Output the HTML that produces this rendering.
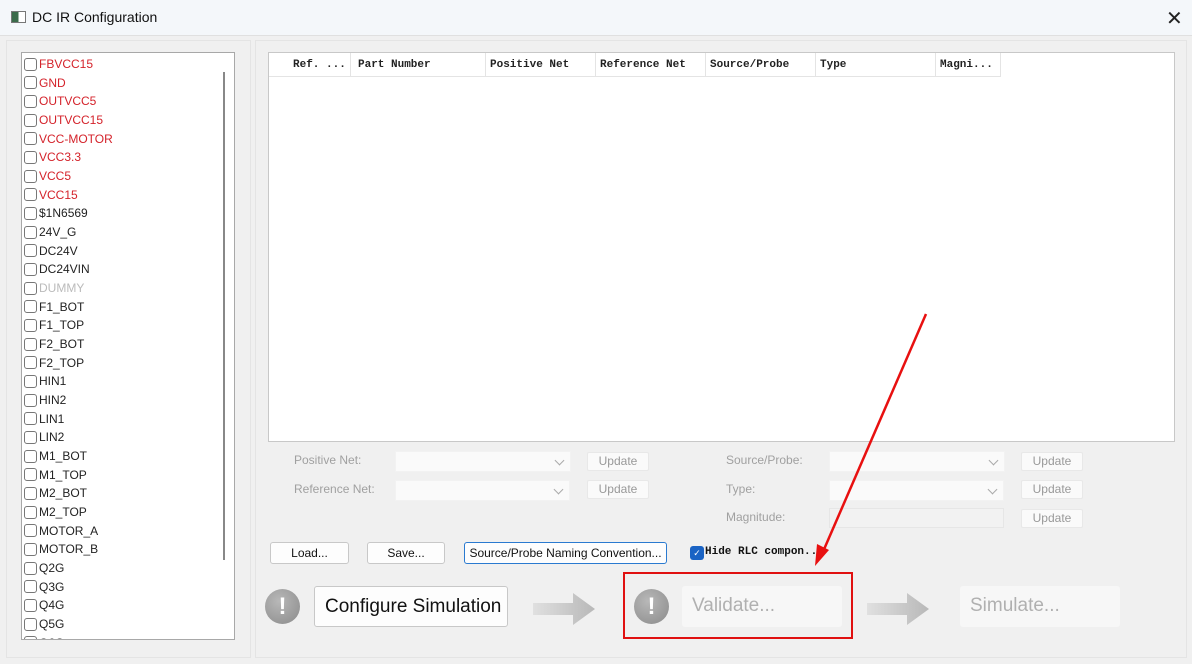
<!DOCTYPE html>
<html><head><style>
*{margin:0;padding:0;box-sizing:border-box}
body{width:1192px;height:664px;background:#f0f0f0;font-family:"Liberation Sans",sans-serif;position:relative;overflow:hidden;font-size:12px}
.a{position:absolute;white-space:nowrap}
.title{left:0;top:0;width:1192px;height:36px;background:#f4f7fa;border-bottom:1px solid #e0e0e0}
.list{left:21px;top:52px;width:214px;height:588px;background:#fff;border:1px solid #a8a8a8;overflow:hidden}
.it{position:absolute;left:2px;height:18px;display:flex;align-items:center;font-size:12px}
.cb{width:13px;height:13px;border:1px solid #777;border-radius:3px;margin-right:2px;background:#fff}
.red{color:#d4222a}.blk{color:#222}.gry{color:#bbb}
.tbl{left:268px;top:52px;width:907px;height:390px;background:#fff;border:1px solid #c8c8c8}
.th{position:absolute;top:0;height:24px;line-height:24px;font-family:"Liberation Mono",monospace;font-size:11px;font-weight:bold;color:#222;border-right:1px solid #e4e4e4;border-bottom:1px solid #e4e4e4;white-space:nowrap;overflow:hidden}
.lbl{color:#a0a0a0;font-size:12px}
.dd{background:#fafafa;height:21px;border:1px solid #f2f2f2}
.dd:after{content:"";position:absolute;right:7px;top:5px;width:6px;height:6px;border-right:1px solid #aaa;border-bottom:1px solid #aaa;transform:rotate(45deg)}
.up{background:#fafafa;border:1px solid #e8e8e8;color:#999;width:62px;height:19px;text-align:center;line-height:17px;font-size:12px;border-radius:2px}
.btn{background:#fdfdfd;border:1px solid #c8c8c8;border-radius:3px;text-align:center;font-size:12px;color:#111}
.ex{width:35px;height:35px;border-radius:50%;background:radial-gradient(circle at 40% 35%,#b8b8b8,#8a8a8a);color:#fff;font-size:24px;font-weight:bold;text-align:center;line-height:35px}
.big{border-radius:3px;font-size:19px;line-height:40px;padding-left:10px}
</style></head><body>
<div class="a title"></div>
<div class="a" style="left:11px;top:11px;width:15px;height:12px;border:1px solid #777;background:linear-gradient(90deg,#3a6b4a 0 50%,#fff 50%)"></div>
<div class="a" style="left:32px;top:9px;font-size:14px;color:#111">DC IR Configuration</div>
<div class="a" style="left:1166px;top:6px;font-size:20px;color:#222">✕</div>
<div class="a" style="left:6px;top:40px;width:245px;height:618px;background:#f0f0f0;border:1px solid #e4e4e4"></div>
<div class="a" style="left:255px;top:40px;width:932px;height:618px;background:#f0f0f0;border:1px solid #e4e4e4"></div>
<div class="a list" id="l"></div>
<div class="a" style="left:223px;top:72px;width:2px;height:488px;background:#888"></div>
<div class="a tbl">
<div class="th" style="left:0;width:82px;padding-left:24px">Ref. ...</div>
<div class="th" style="left:82px;width:135px;padding-left:7px">Part Number</div>
<div class="th" style="left:217px;width:110px;padding-left:4px">Positive Net</div>
<div class="th" style="left:327px;width:110px;padding-left:4px">Reference Net</div>
<div class="th" style="left:437px;width:110px;padding-left:4px">Source/Probe</div>
<div class="th" style="left:547px;width:120px;padding-left:4px">Type</div>
<div class="th" style="left:667px;width:65px;padding-left:4px">Magni...</div>
</div>
<div class="a lbl" style="left:294px;top:453px">Positive Net:</div>
<div class="a lbl" style="left:294px;top:482px">Reference Net:</div>
<div class="a dd" style="left:395px;top:451px;width:176px"></div>
<div class="a dd" style="left:395px;top:480px;width:175px"></div>
<div class="a up" style="left:587px;top:452px">Update</div>
<div class="a up" style="left:587px;top:480px">Update</div>
<div class="a lbl" style="left:726px;top:453px">Source/Probe:</div>
<div class="a lbl" style="left:726px;top:482px">Type:</div>
<div class="a lbl" style="left:726px;top:510px">Magnitude:</div>
<div class="a dd" style="left:829px;top:451px;width:176px"></div>
<div class="a dd" style="left:829px;top:480px;width:175px"></div>
<div class="a" style="left:829px;top:508px;width:175px;height:20px;border:1px solid #e6e6e6;background:#f2f2f2"></div>
<div class="a up" style="left:1021px;top:452px">Update</div>
<div class="a up" style="left:1021px;top:480px">Update</div>
<div class="a up" style="left:1021px;top:509px">Update</div>
<div class="a btn" style="left:270px;top:542px;width:79px;height:22px;line-height:20px">Load...</div>
<div class="a btn" style="left:367px;top:542px;width:78px;height:22px;line-height:20px">Save...</div>
<div class="a btn" style="left:464px;top:542px;width:203px;height:22px;line-height:20px;border-color:#2a7ad0">Source/Probe Naming Convention...</div>
<div class="a" style="left:690px;top:546px;width:14px;height:14px;background:#1a63c4;border-radius:3px;color:#fff;font-size:9px;text-align:center;line-height:14px">✓</div>
<div class="a" style="left:705px;top:546px;font-family:'Liberation Mono',monospace;font-size:11px;font-weight:bold;color:#111">Hide RLC compon..</div>
<div class="a ex" style="left:265px;top:589px">!</div>
<div class="a btn big" style="left:314px;top:586px;width:194px;height:41px;color:#111;text-align:left">Configure Simulation</div>
<div class="a ex" style="left:634px;top:589px">!</div>
<div class="a big" style="left:682px;top:586px;width:160px;height:41px;background:#f7f7f7;color:#b0b0b0">Validate...</div>
<div class="a big" style="left:960px;top:586px;width:160px;height:41px;background:#f7f7f7;color:#b0b0b0">Simulate...</div>
<svg class="a" style="left:0;top:0" width="1192" height="664">
<defs><linearGradient id="g" x1="0" x2="1"><stop offset="0" stop-color="#e0e0e0"/><stop offset="1" stop-color="#b8b8b8"/></linearGradient></defs>
<path d="M533 603h40v-10l22 16-22 16v-10h-40z" fill="url(#g)"/>
<path d="M867 603h40v-10l22 16-22 16v-10h-40z" fill="url(#g)"/>
<rect x="624" y="573" width="228" height="65" fill="none" stroke="#e01010" stroke-width="2"/>
<line x1="926" y1="314" x2="822" y2="554" stroke="#e81010" stroke-width="2.5"/>
<path d="M815 566l2-22 12 6z" fill="#e81010"/>
</svg>
<script>
var n=["FBVCC15","GND","OUTVCC5","OUTVCC15","VCC-MOTOR","VCC3.3","VCC5","VCC15","$1N6569","24V_G","DC24V","DC24VIN","DUMMY","F1_BOT","F1_TOP","F2_BOT","F2_TOP","HIN1","HIN2","LIN1","LIN2","M1_BOT","M1_TOP","M2_BOT","M2_TOP","MOTOR_A","MOTOR_B","Q2G","Q3G","Q4G","Q5G","Q6G"],h="";
n.forEach(function(s,i){var c=i<8?"red":(s=="DUMMY"?"gry":"blk");h+='<div class="it '+c+'" style="top:'+(2+i*18.67)+'px"><span class="cb"></span>'+s+'</div>';});
document.getElementById("l").innerHTML=h;
</script>
</body></html>
